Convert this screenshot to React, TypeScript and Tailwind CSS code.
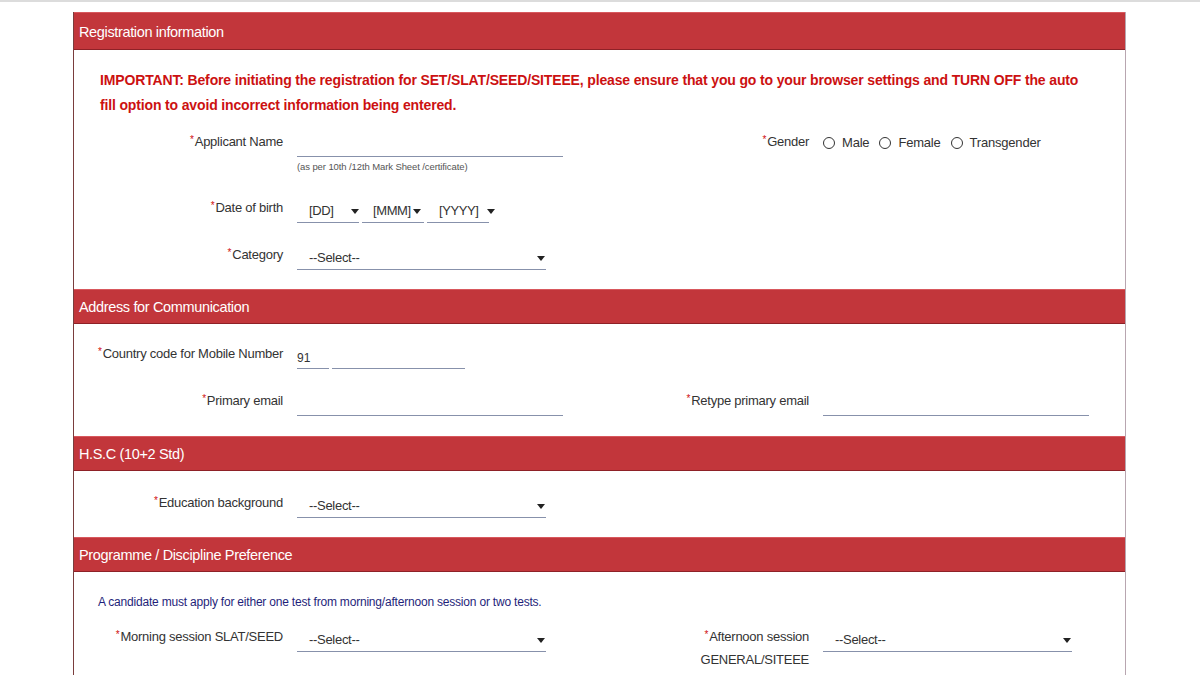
import React from "react";

const FONT = { fontFamily: '"Liberation Sans", Arial, sans-serif' };

function Req({ children }: { children: React.ReactNode }) {
  return (
    <span className="text-[13px] leading-[18px] tracking-[-0.25px] text-[#333]">
      <span className="relative -top-[3px] mr-[1px] text-[10px] leading-none text-[#d01010]">*</span>
      {children}
    </span>
  );
}

function SectionHeader({ title, tall }: { title: string; tall?: boolean }) {
  return (
    <div
      className={
        "flex items-center border-y border-t-[#d8585d] border-b-[#8e2127] bg-[#c2363b] pl-[5px] pt-[3px] text-[14.5px] tracking-[-0.35px] text-white " +
        (tall ? "h-[38px]" : "h-[35px]")
      }
    >
      {title}
    </div>
  );
}

function Underline({ width, children }: { width: string; children?: React.ReactNode }) {
  return (
    <div className={"flex h-[26px] shrink-0 items-center border-b border-[#8791ab] text-[13px] text-[#333] " + width}>
      {children}
    </div>
  );
}

function Caret() {
  return (
    <svg width="8" height="5" viewBox="0 0 8 5" className="shrink-0">
      <path d="M0 0 L8 0 L4 5 Z" fill="#222" />
    </svg>
  );
}

function SelectBox({ width }: { width: string }) {
  return (
    <Underline width={width}>
      <span className="flex w-full items-center justify-between pl-[12px] pr-[1px] pt-[3px] tracking-[-0.3px]">
        --Select--
        <Caret />
      </span>
    </Underline>
  );
}

function DateBox({ label, pl, gap }: { label: string; pl: string; gap: string }) {
  return (
    <Underline width="w-[62px]">
      <span className={"flex items-center pt-[3px] tracking-[-0.4px] " + pl + " " + gap}>
        {label}
        <Caret />
      </span>
    </Underline>
  );
}

function Label({ children }: { children: React.ReactNode }) {
  return (
    <div className="w-[210px] shrink-0 pt-[2px] pr-[1px] text-right text-[13px] leading-[18px]">{children}</div>
  );
}

function Half({ children }: { children: React.ReactNode }) {
  return <div className="flex w-[526px] shrink-0 items-start gap-[13px]">{children}</div>;
}

function Row({ className = "", children }: { className?: string; children: React.ReactNode }) {
  return <div className={"flex items-start " + className}>{children}</div>;
}

function Radio({ label }: { label: string }) {
  return (
    <span className="flex items-center gap-[7px] text-[13px] tracking-[-0.2px] text-[#333]">
      <span className="h-[12px] w-[12px] rounded-full border border-[#333] bg-white" />
      {label}
    </span>
  );
}

export default function App() {
  return (
    <div className="h-[675px] w-[1200px] overflow-hidden bg-white" style={FONT}>
      <div className="h-[2px] bg-[#dcdcdc]" />
      <div className="ml-[73px] mt-[10px] w-[1053px] border-x border-l-[#7a3d3d] border-r-[#b8a6b0]">
        {/* Registration information */}
        <SectionHeader title="Registration information" tall />
        <div className="pt-[18px] pb-[19px]">
          <p className="pl-[26px] text-[14px] font-bold leading-[25px] tracking-[-0.15px] text-[#cc1111]">
            IMPORTANT: Before initiating the registration for SET/SLAT/SEED/SITEEE, please ensure that you go to your browser settings and TURN OFF the auto
            <br />
            fill option to avoid incorrect information being entered.
          </p>
          <Row className="mt-[13px]">
            <Half>
              <Label>
                <Req>Applicant Name</Req>
              </Label>
              <div className="flex flex-col">
                <Underline width="w-[266px]" />
                <span className="mt-[4px] text-[9.5px] leading-[12px] tracking-[-0.1px] text-[#555]">
                  (as per 10th /12th Mark Sheet /certificate)
                </span>
              </div>
            </Half>
            <Half>
              <Label>
                <Req>Gender</Req>
              </Label>
              <div className="flex items-center gap-[10px] pt-[3px] leading-[18px]">
                <Radio label="Male" />
                <Radio label="Female" />
                <Radio label="Transgender" />
              </div>
            </Half>
          </Row>
          <Row className="mt-[24px]">
            <Half>
              <Label>
                <Req>Date of birth</Req>
              </Label>
              <div className="flex gap-[3px]">
                <DateBox label="[DD]" pl="pl-[12px]" gap="gap-[18px]" />
                <DateBox label="[MMM]" pl="pl-[11px]" gap="gap-[2px]" />
                <DateBox label="[YYYY]" pl="pl-[12px]" gap="gap-[8px]" />
              </div>
            </Half>
          </Row>
          <Row className="mt-[21px]">
            <Half>
              <Label>
                <Req>Category</Req>
              </Label>
              <SelectBox width="w-[249px]" />
            </Half>
          </Row>
        </div>

        {/* Address for Communication */}
        <SectionHeader title="Address for Communication" />
        <div className="pt-[19px] pb-[20px]">
          <Row>
            <Half>
              <Label>
                <Req>Country code for Mobile Number</Req>
              </Label>
              <div className="flex gap-[3px]">
                <Underline width="w-[32px]">
                  <span className="pt-[4px] text-[12px]">91</span>
                </Underline>
                <Underline width="w-[133px]" />
              </div>
            </Half>
          </Row>
          <Row className="mt-[21px]">
            <Half>
              <Label>
                <Req>Primary email</Req>
              </Label>
              <Underline width="w-[266px]" />
            </Half>
            <Half>
              <Label>
                <Req>Retype primary email</Req>
              </Label>
              <Underline width="w-[266px]" />
            </Half>
          </Row>
        </div>

        {/* H.S.C */}
        <SectionHeader title="H.S.C (10+2 Std)" />
        <div className="pt-[21px] pb-[19px]">
          <Row>
            <Half>
              <Label>
                <Req>Education background</Req>
              </Label>
              <SelectBox width="w-[249px]" />
            </Half>
          </Row>
        </div>

        {/* Programme / Discipline Preference */}
        <SectionHeader title="Programme / Discipline Preference" />
        <div className="pt-[22px] pb-[20px]">
          <p className="pl-[24px] text-[12px] leading-[16px] tracking-[-0.2px] text-[#1f1f7a]">
            A candidate must apply for either one test from morning/afternoon session or two tests.
          </p>
          <Row className="mt-[16px]">
            <Half>
              <Label>
                <Req>Morning session SLAT/SEED</Req>
              </Label>
              <SelectBox width="w-[249px]" />
            </Half>
            <Half>
              <Label>
                <Req>Afternoon session</Req>
                <span className="mt-[5px] block tracking-[-0.25px] text-[#333]">GENERAL/SITEEE</span>
              </Label>
              <SelectBox width="w-[249px]" />
            </Half>
          </Row>
        </div>
      </div>
    </div>
  );
}
